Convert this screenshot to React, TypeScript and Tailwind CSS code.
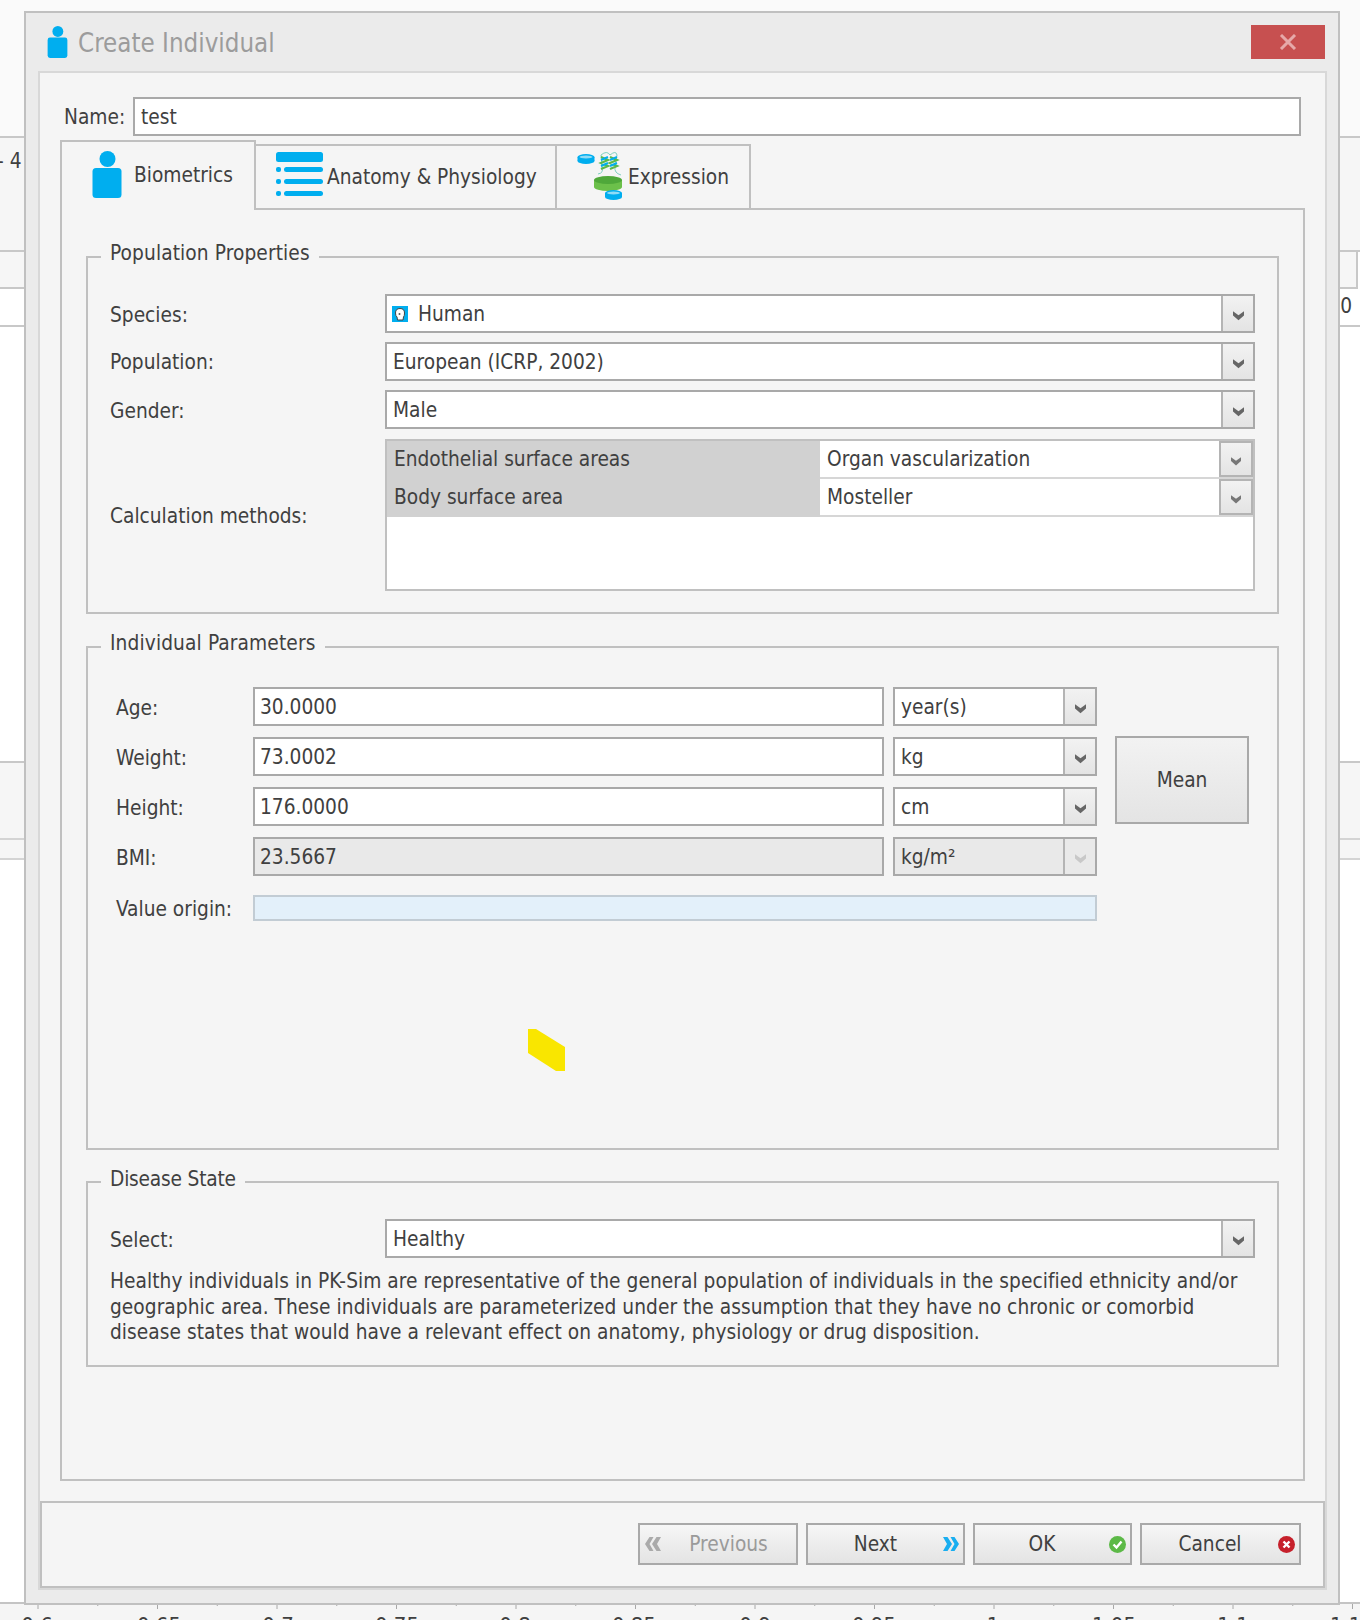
import React from "react";

const Chevron = ({ color = "#666666", size = 11 }: { color?: string; size?: number }) => (
  <svg width={size} height={size} viewBox="0 0 10 10" className="mt-1">
    <path d="M0 1.2 L5 4.8 L10 1.2 V5 L5 9.4 L0 5 Z" fill={color} />
  </svg>
);

const Person = ({ w, h }: { w: number; h: number }) => (
  <svg width={w} height={h} viewBox="0 0 30 47" className="shrink-0">
    <circle cx="15.5" cy="8" r="8" fill="#00aeef" />
    <rect x="0.5" y="17" width="29" height="30" rx="3.5" fill="#00aeef" />
  </svg>
);

const Combo = ({
  value,
  disabled = false,
  icon,
}: {
  value: string;
  disabled?: boolean;
  icon?: React.ReactNode;
}) => (
  <div className={`flex h-[39px] w-full items-stretch border-2 border-[#a9a9a9] ${disabled ? "bg-[#e9e9e9]" : "bg-white"}`}>
    <div className="flex min-w-0 flex-1 items-center pl-[6px]">
      {icon}
      <span>{value}</span>
    </div>
    <div className={`flex w-[32px] items-center justify-center border-l-2 border-[#b4b4b4] ${disabled ? "bg-[#e9e9e9]" : "bg-gradient-to-b from-[#f2f2f2] to-[#e4e4e4]"}`}>
      <Chevron color={disabled ? "#c8c8c8" : "#666666"} />
    </div>
  </div>
);

const TextBox = ({ value, disabled = false }: { value: string; disabled?: boolean }) => (
  <div className={`flex h-[39px] w-[631px] items-center border-2 border-[#a9a9a9] pl-[5px] ${disabled ? "bg-[#e9e9e9]" : "bg-white"}`}>
    <span>{value}</span>
  </div>
);

const CalcRow = ({ name, value, nameClass }: { name: string; value: string; nameClass: string }) => (
  <div className="flex h-[38px] border-b-2 border-[#d6d6d6]">
    <div className="-mb-[2px] flex w-[433px] items-center bg-[#d1d1d1] pl-[7px]">
      <span className={nameClass}>{name}</span>
    </div>
    <div className="flex flex-1 items-center pl-[7px]">
      <span>{value}</span>
    </div>
    <div className="flex w-[34px] items-center justify-center border-2 border-[#b4b4b4] bg-gradient-to-b from-[#f2f2f2] to-[#e4e4e4]">
      <Chevron color="#777777" size={10} />
    </div>
  </div>
);

const Param = ({ label, value, unit, disabled = false }: { label: string; value: string; unit: string; disabled?: boolean }) => (
  <div className="flex h-[39px] items-center">
    <span className="mt-[2px] w-[137px]">{label}</span>
    <TextBox value={value} disabled={disabled} />
    <div className="ml-[9px] w-[204px]">
      <Combo value={unit} disabled={disabled} />
    </div>
  </div>
);

const FooterButton = ({
  label,
  icon,
  iconLeft = false,
  muted = false,
  width,
}: {
  label: string;
  icon: React.ReactNode;
  iconLeft?: boolean;
  muted?: boolean;
  width: string;
}) => (
  <div className={`flex h-[42px] items-center border-2 border-[#a9a9a9] bg-gradient-to-b from-[#f6f6f6] to-[#e4e4e4] ${width} ${iconLeft ? "pl-[5px]" : "pr-[4px]"} ${muted ? "text-[#9a9a9a]" : ""}`}>
    {iconLeft && icon}
    <span className="flex-1 text-center">{label}</span>
    {!iconLeft && icon}
  </div>
);

const ticks = Array.from({ length: 23 }, (_, i) => 38 + i * 59.75);
const labels: [number, string][] = [
  [37, "0.6"], [159, "0.65"], [278, "0.7"], [397, "0.75"], [515, "0.8"], [634, "0.85"],
  [755, "0.9"], [874, "0.95"], [993, "1"], [1114, "1.05"], [1233, "1.1"], [1352, "1.15"],
];

export default function App() {
  return (
    <div className="relative flex h-[1620px] w-[1360px] flex-col overflow-hidden bg-white font-['DejaVu_Sans_Condensed','DejaVu_Sans',sans-serif] text-[20.7px] leading-[26px] text-[#404040]">
      {/* application behind the dialog */}
      <div className="h-[138px] shrink-0 border-b-2 border-[#c8c8c8] bg-[#fafafa]" />
      <div className="flex h-[114px] shrink-0 items-start border-b-2 border-[#c8c8c8] bg-[#f6f6f6] pt-[10px]">
        <span className="-ml-[3px]">- 4</span>
      </div>
      <div className="mr-[2px] h-[37px] shrink-0 border-r-2 border-b-2 border-[#c8c8c8] bg-[#f6f6f6]" />
      <div className="flex h-[38px] shrink-0 justify-end border-b-2 border-[#c8c8c8] pt-[4px] pr-[8px]">
        <span>0</span>
      </div>
      <div className="h-[436px] shrink-0 border-b-2 border-[#c8c8c8]" />
      <div className="h-[77px] shrink-0 border-b-2 border-[#d4d4d4] bg-[#f6f6f6]" />
      <div className="h-[20px] shrink-0 border-b-2 border-[#d4d4d4] bg-[#f6f6f6]" />
      <div className="flex-1 bg-white" />
      <div className="h-[18px] shrink-0 border-t-2 border-[#c4c4c4] bg-[#f5f5f5]">
        <svg width="1360" height="16" className="block">
          {ticks.map((x, i) => (
            <line key={i} x1={x} x2={x} y1="0" y2={i % 2 === 0 ? 5 : 2} stroke="#a8a8a8" strokeWidth="1" />
          ))}
          {labels.map(([x, t]) => (
            <text key={t} x={x} y="29" textAnchor="middle" fontSize="22" fill="#404040">
              {t}
            </text>
          ))}
        </svg>
      </div>

      {/* dialog window */}
      <div className="absolute top-[11px] left-[24px] flex h-[1594px] w-[1316px] flex-col border-2 border-[#c0c0c0] bg-[#ebebeb]">
        <div className="flex h-[58px] shrink-0 items-center pr-[13px] pl-[21px]">
          <Person w={21} h={32} />
          <span className="mt-[2px] ml-[10px] flex-1 text-[25.7px] text-[#9c9c9c]">Create Individual</span>
          <div className="flex h-[34px] w-[74px] items-center justify-center bg-[#c75050]">
            <svg width="18" height="16" viewBox="0 0 18 16">
              <path d="M2 1 L16 15 M16 1 L2 15" stroke="#e6a9a9" strokeWidth="3" />
            </svg>
          </div>
        </div>

        <div className="mr-[11px] ml-[12px] flex h-[1519px] flex-col border-2 border-[#d8d8d8] bg-[#f5f5f5] pb-[2px]">
          <div className="mt-[24px] flex h-[39px] shrink-0 items-center px-[24px]">
            <span className="w-[69px]">Name:</span>
            <div className="flex h-[39px] flex-1 items-center border-2 border-[#a9a9a9] bg-white pl-[6px]">
              <span>test</span>
            </div>
          </div>

          <div className="mx-[20px] mt-[4px] flex h-[1341px] flex-col">
            <div className="relative z-10 -mb-[2px] flex h-[70px] shrink-0 items-start">
              <div className="flex h-[70px] w-[196px] items-center border-x-2 border-t-2 border-[#c0c0c0] bg-[#f5f5f5] pb-[4px] pl-[30px]">
                <Person w={30} h={47} />
                <span className="mt-[2px] ml-[12px]">Biometrics</span>
              </div>
              <div className="mt-[4px] flex h-[66px] w-[301px] items-center border-t-2 border-r-2 border-[#c0c0c0] pb-[4px] pl-[20px]">
                <svg width="48" height="45" viewBox="0 0 48 45" className="-mt-[3px] shrink-0">
                  <rect x="0" y="0" width="47" height="10" rx="2.5" fill="#00aeef" />
                  {[15, 27, 39].map((y) => (
                    <g key={y}>
                      <rect x="0" y={y} width="5" height="5" rx="2" fill="#00aeef" />
                      <rect x="8" y={y} width="39" height="5" rx="2.5" fill="#00aeef" />
                    </g>
                  ))}
                </svg>
                <span className="mt-[2px] ml-[3px]">Anatomy &amp; Physiology</span>
              </div>
              <div className="mt-[4px] flex h-[66px] w-[194px] items-center border-t-2 border-r-2 border-[#c0c0c0] pb-[4px] pl-[20px]">
                <svg width="46" height="50" viewBox="0 0 46 50" className="shrink-0">
                  <rect x="0.5" y="6" width="17" height="4" fill="#00aeef" />
                  <ellipse cx="9" cy="10" rx="8.5" ry="3" fill="#00aeef" />
                  <ellipse cx="9" cy="6" rx="8.5" ry="3" fill="#00aeef" />
                  <ellipse cx="9" cy="6" rx="6.5" ry="1.5" fill="#8fdcf7" />
                  <path d="M21 23 Q27 22 25 16 L24 4 Q30 -1 33 4 Q39 -1 40 4 L38 16 Q37 22 44 24" fill="none" stroke="#7fd0c0" strokeWidth="1" />
                  <path d="M24 6 L31 9 L24 12 L31 15 L24 18 M33 6 L40 9 L33 12 L40 15 L33 18" fill="none" stroke="#5bb84b" strokeWidth="2.2" />
                  <path d="M24 9 L31 6 M24 15 L31 12 M33 9 L40 6 M33 15 L40 12" fill="none" stroke="#00aeef" strokeWidth="2" />
                  <rect x="17" y="29" width="28" height="7" fill="#6cc04a" />
                  <ellipse cx="31" cy="36" rx="14" ry="4" fill="#6cc04a" />
                  <ellipse cx="31" cy="29" rx="14" ry="4" fill="#4fa83a" />
                  <rect x="28" y="42" width="17" height="4" fill="#00aeef" />
                  <ellipse cx="36.5" cy="46" rx="8.5" ry="3" fill="#00aeef" />
                  <ellipse cx="36.5" cy="42" rx="8.5" ry="3" fill="#00aeef" />
                  <ellipse cx="36.5" cy="42" rx="6.5" ry="1.5" fill="#8fdcf7" />
                </svg>
                <span className="mt-[2px] ml-[5px]">Expression</span>
              </div>
            </div>

            <div className="flex h-[1273px] shrink-0 flex-col border-2 border-[#c0c0c0] pr-[24px] pl-[24px]">
              {/* Population Properties */}
              <fieldset className="mt-[33px] border-2 border-[#c0c0c0] pr-[22px] pb-[21px] pl-[22px]">
                <legend className="-ml-[9px] h-[28px] px-[9px] leading-[20px] tracking-[0.1px]">Population Properties</legend>
                <div className="mt-[23px] flex flex-col gap-[9px]">
                  <div className="flex items-center">
                    <span className="mt-[2px] w-[275px]">Species:</span>
                    <div className="flex-1">
                      <Combo
                        value="Human"
                        icon={
                          <svg width="16" height="16" viewBox="0 0 16 16" className="mr-[10px] -ml-[1px] shrink-0">
                            <rect width="16" height="16" fill="#00aeef" />
                            <path d="M3.5 7 Q3.5 2.5 8 2.5 Q12.5 2.5 12.5 7 Q12.5 10 11.5 11 L11 14 L5.5 14 L5 11 Q3.5 10 3.5 7 Z" fill="#ffffff" stroke="#444444" strokeWidth="1" />
                            <circle cx="7.5" cy="8" r="1" fill="#555555" />
                          </svg>
                        }
                      />
                    </div>
                  </div>
                  <div className="flex items-center">
                    <span className="w-[275px]">Population:</span>
                    <div className="flex-1">
                      <Combo value="European (ICRP, 2002)" />
                    </div>
                  </div>
                  <div className="flex items-center">
                    <span className="mt-[2px] w-[275px]">Gender:</span>
                    <div className="flex-1">
                      <Combo value="Male" />
                    </div>
                  </div>
                  <div className="mt-[1px] flex items-center">
                    <span className="mt-[2px] w-[275px]">Calculation methods:</span>
                    <div className="h-[152px] flex-1 border-2 border-[#c0c0c0] bg-white">
                      <CalcRow name="Endothelial surface areas" value="Organ vascularization" nameClass="-mt-[2px]" />
                      <CalcRow name="Body surface area" value="Mosteller" nameClass="-mt-[2px]" />
                    </div>
                  </div>
                </div>
              </fieldset>

              {/* Individual Parameters */}
              <fieldset className="mt-[19px] h-[517px] border-2 border-[#c0c0c0] pl-[28px]">
                <legend className="-ml-[15px] h-[28px] px-[9px] leading-[20px] tracking-[0.12px]">Individual Parameters</legend>
                <div className="mt-[26px] flex items-start">
                  <div className="flex flex-col gap-[11px]">
                    <Param label="Age:" value="30.0000" unit="year(s)" />
                    <Param label="Weight:" value="73.0002" unit="kg" />
                    <Param label="Height:" value="176.0000" unit="cm" />
                    <Param label="BMI:" value="23.5667" unit="kg/m²" disabled />
                  </div>
                  <div className="mt-[49px] ml-[18px] flex h-[88px] w-[134px] items-center justify-center border-2 border-[#a9a9a9] bg-gradient-to-b from-[#f2f2f2] to-[#e4e4e4]">
                    <span>Mean</span>
                  </div>
                </div>
                <div className="mt-[19px] flex h-[26px] items-center">
                  <span className="mt-[2px] w-[137px]">Value origin:</span>
                  <div className="h-[26px] w-[844px] border-2 border-[#c2ccd4] bg-[#e3f0fa]" />
                </div>
              </fieldset>

              {/* Disease State */}
              <fieldset className="mt-[18px] border-2 border-[#c0c0c0] pr-[22px] pb-[19px] pl-[22px]">
                <legend className="-ml-[9px] h-[28px] px-[9px] leading-[22px] tracking-[-0.2px]">Disease State</legend>
                <div className="mt-[23px] flex items-center">
                  <span className="mt-[2px] w-[275px]">Select:</span>
                  <div className="flex-1">
                    <Combo value="Healthy" />
                  </div>
                </div>
                <p className="mt-[11px] leading-[25.5px] tracking-[0.05px]">
                  Healthy individuals in PK-Sim are representative of the general population of individuals in the specified ethnicity and/or
                  <br />
                  geographic area. These individuals are parameterized under the assumption that they have no chronic or comorbid
                  <br />
                  disease states that would have a relevant effect on anatomy, physiology or drug disposition.
                </p>
              </fieldset>
            </div>
          </div>

          {/* footer */}
          <div className="mt-[20px] flex h-[87px] shrink-0 items-start justify-end gap-[8px] border-2 border-[#c0c0c0] pt-[20px] pr-[22px]">
            <FooterButton
              label="Previous"
              iconLeft
              muted
              width="w-[160px]"
              icon={
                <svg width="16" height="14" viewBox="0 0 16 14" className="shrink-0">
                  <path d="M16 0 H11.5 L7 7 L11.5 14 H16 L12 7 Z M8.5 0 H4.5 L0 7 L4.5 14 H8.5 L4.5 7 Z" fill="#aaaaaa" />
                </svg>
              }
            />
            <FooterButton
              label="Next"
              width="w-[159px]"
              icon={
                <svg width="16" height="14" viewBox="0 0 16 14" className="shrink-0">
                  <path d="M0 0 H4.5 L9 7 L4.5 14 H0 L4 7 Z M7.5 0 H11.5 L16 7 L11.5 14 H7.5 L11.5 7 Z" fill="#19aef0" />
                </svg>
              }
            />
            <FooterButton
              label="OK"
              width="w-[159px]"
              icon={
                <svg width="17" height="17" viewBox="0 0 17 17" className="shrink-0">
                  <circle cx="8.5" cy="8.5" r="8.5" fill="#5cb947" />
                  <path d="M4.5 8.5 L7.5 11.5 L12.5 5.5" fill="none" stroke="#ffffff" strokeWidth="2.4" />
                </svg>
              }
            />
            <FooterButton
              label="Cancel"
              width="w-[161px]"
              icon={
                <svg width="17" height="17" viewBox="0 0 17 17" className="shrink-0">
                  <circle cx="8.5" cy="8.5" r="8.5" fill="#c6202b" />
                  <path d="M5.5 5.5 L11.5 11.5 M11.5 5.5 L5.5 11.5" stroke="#ffffff" strokeWidth="2.4" />
                </svg>
              }
            />
          </div>
        </div>
      </div>

      {/* yellow marker over the dialog */}
      <svg width="38" height="43" viewBox="0 0 38 43" className="absolute top-[1029px] left-[528px]">
        <path d="M0 0 H8 L37 18 V42 H28 L0 24 Z" fill="#f9e600" />
      </svg>
    </div>
  );
}
